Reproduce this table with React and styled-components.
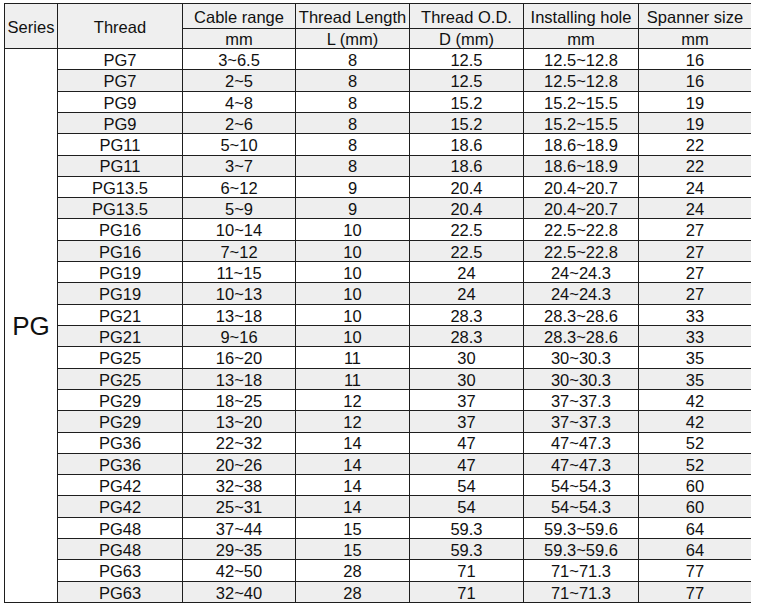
import React from "react"
import styled, { createGlobalStyle } from "styled-components"

const GlobalStyle = createGlobalStyle`
  body {
    margin: 0;
    background: #ffffff;
    font-family: "Liberation Sans", Arial, sans-serif;
    color: #111111;
  }
`

const Page = styled.div`
  padding: 3px 0 0 4px;
`

const Table = styled.div`
  display: grid;
  grid-template-columns: 52px 124px 112px 113px 113px 114px 112px;
  grid-template-rows: 24px 19px repeat(26, 1fr);
  gap: 1px;
  width: 747px;
  height: 600px;
  padding: 1px;
  box-sizing: border-box;
  background: #1e1e1e;
`

const Cell = styled.div`
  display: flex;
  align-items: center;
  justify-content: center;
  padding-top: 2px;
  background: ${(props) => (props.$shade ? "#eeeeee" : "#ffffff")};
  font-size: 16.5px;
  line-height: 1;
  white-space: nowrap;
`

const HeadCell = styled(Cell)`
  background: #efefef;
  grid-row: ${(props) => props.$rows || "auto"};
`

const SeriesCell = styled(Cell)`
  grid-row: 3 / span 26;
  grid-column: 1;
  font-size: 26px;
  background: #ffffff;
`

const headers = [
  ["Cable range", "mm"],
  ["Thread Length", "L (mm)"],
  ["Thread O.D.", "D (mm)"],
  ["Installing hole", "mm"],
  ["Spanner size", "mm"],
]

const rows = [
  ["PG7", "3~6.5", "8", "12.5", "12.5~12.8", "16"],
  ["PG7", "2~5", "8", "12.5", "12.5~12.8", "16"],
  ["PG9", "4~8", "8", "15.2", "15.2~15.5", "19"],
  ["PG9", "2~6", "8", "15.2", "15.2~15.5", "19"],
  ["PG11", "5~10", "8", "18.6", "18.6~18.9", "22"],
  ["PG11", "3~7", "8", "18.6", "18.6~18.9", "22"],
  ["PG13.5", "6~12", "9", "20.4", "20.4~20.7", "24"],
  ["PG13.5", "5~9", "9", "20.4", "20.4~20.7", "24"],
  ["PG16", "10~14", "10", "22.5", "22.5~22.8", "27"],
  ["PG16", "7~12", "10", "22.5", "22.5~22.8", "27"],
  ["PG19", "11~15", "10", "24", "24~24.3", "27"],
  ["PG19", "10~13", "10", "24", "24~24.3", "27"],
  ["PG21", "13~18", "10", "28.3", "28.3~28.6", "33"],
  ["PG21", "9~16", "10", "28.3", "28.3~28.6", "33"],
  ["PG25", "16~20", "11", "30", "30~30.3", "35"],
  ["PG25", "13~18", "11", "30", "30~30.3", "35"],
  ["PG29", "18~25", "12", "37", "37~37.3", "42"],
  ["PG29", "13~20", "12", "37", "37~37.3", "42"],
  ["PG36", "22~32", "14", "47", "47~47.3", "52"],
  ["PG36", "20~26", "14", "47", "47~47.3", "52"],
  ["PG42", "32~38", "14", "54", "54~54.3", "60"],
  ["PG42", "25~31", "14", "54", "54~54.3", "60"],
  ["PG48", "37~44", "15", "59.3", "59.3~59.6", "64"],
  ["PG48", "29~35", "15", "59.3", "59.3~59.6", "64"],
  ["PG63", "42~50", "28", "71", "71~71.3", "77"],
  ["PG63", "32~40", "28", "71", "71~71.3", "77"],
]

const App = () => {
  return (
    <Page>
      <GlobalStyle />
      <Table>
        <HeadCell $rows="1 / span 2">Series</HeadCell>
        <HeadCell $rows="1 / span 2">Thread</HeadCell>
        {headers.map(([title]) => (
          <HeadCell key={title}>{title}</HeadCell>
        ))}
        {headers.map(([title, unit]) => (
          <HeadCell key={title + "-unit"}>{unit}</HeadCell>
        ))}
        <SeriesCell>PG</SeriesCell>
        {rows.map((row, i) =>
          row.map((value, j) => (
            <Cell key={i + "-" + j} $shade={i % 2 === 1}>
              {value}
            </Cell>
          ))
        )}
      </Table>
    </Page>
  )
}

export default App
